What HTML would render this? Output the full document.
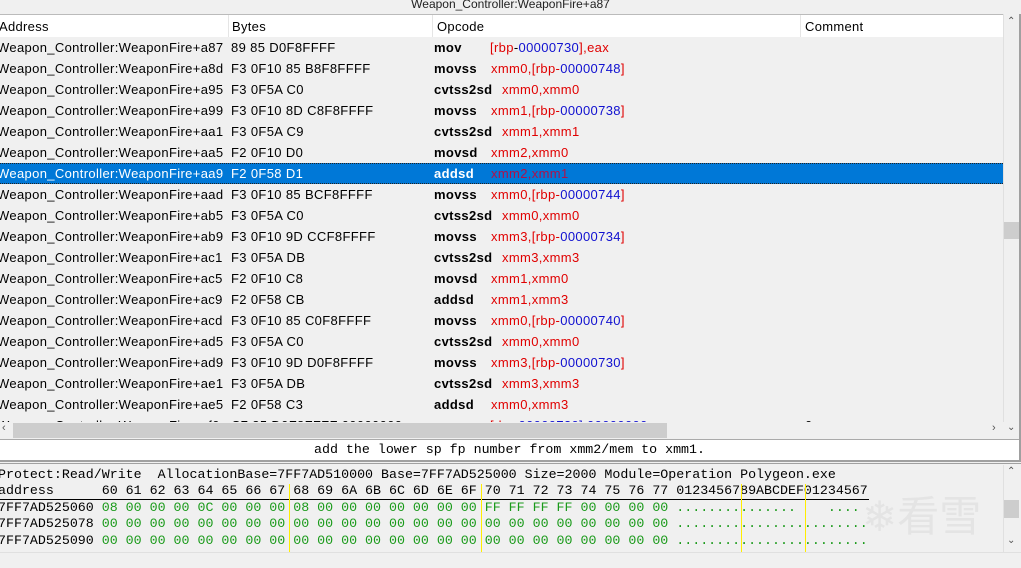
<!DOCTYPE html>
<html><head><meta charset="utf-8"><style>
*{margin:0;padding:0;box-sizing:border-box}
body{width:1021px;height:568px;overflow:hidden;background:#f0f0f0;font-family:"Liberation Sans",sans-serif;font-size:13px;position:relative;color:#000}
.abs{position:absolute;white-space:pre}
.title{left:0;top:0;width:1021px;height:13px;text-align:center;font-size:12px;line-height:9px;color:#222}
.hdr{left:0;top:14px;width:1003px;height:23px;background:#fff;border-top:1px solid #bbb}
.hdr span{position:absolute;top:4px;letter-spacing:0.3px}
.sep{position:absolute;top:0;width:1px;height:23px;background:#e5e5e5}
.rows{position:absolute;left:0;top:37px;width:1003px;height:385px;background:#f0f0f0;overflow:hidden}
.row{position:absolute;left:0;width:1003px;height:21px;line-height:21px;letter-spacing:0.35px}
.row span{position:absolute;top:0;white-space:pre}
.m{font-weight:bold}
.r{color:#e00000}.b{color:#1010d0;font-weight:normal}
.sel{background:#0078d7;color:#fff;border-top:1px dotted #222;border-bottom:1px dotted #222;line-height:19px}
.sel .r{color:#b0104a}
.mono{font-family:"Liberation Mono",monospace;font-size:13.3px}
.hex{position:absolute;left:-2px;height:16px;line-height:16px;white-space:pre}
.g{color:#1a9a1a}
.y{position:absolute;width:1px;background:#ffee00;top:484px;height:68px}
</style></head><body>
<div class="abs title">Weapon_Controller:WeaponFire+a87</div>
<div class="abs hdr">
<span style="left:-1px">Address</span><div class="sep" style="left:228px"></div>
<span style="left:232px">Bytes</span><div class="sep" style="left:432px"></div>
<span style="left:437px">Opcode</span><div class="sep" style="left:800px"></div>
<span style="left:805px">Comment</span>
</div>
<div class="abs" style="left:1003px;top:14px;width:18px;height:408px;background:#f0f0f0;border-left:1px solid #e0e0e0"></div>
<div class="abs" style="left:1007px;top:16px;font-size:10px;color:#555">&#8963;</div>
<div class="abs" style="left:1004px;top:222px;width:15px;height:17px;background:#cdcdcd"></div>
<div class="abs" style="left:1019px;top:14px;width:2px;height:446px;background:#a0a0a0"></div>

<div class="rows">
<div class="row" style="top:0px"><span style="left:-3px">Weapon_Controller:WeaponFire+a87</span><span style="left:231px">89 85 D0F8FFFF</span><span class="m" style="left:434px">mov</span><span style="left:490px"><i class="r" style="font-style:normal">[rbp</i>-<i class="b" style="font-style:normal">00000730</i><i class="r" style="font-style:normal">],eax</i></span></div>
<div class="row" style="top:21px"><span style="left:-3px">Weapon_Controller:WeaponFire+a8d</span><span style="left:231px">F3 0F10 85 B8F8FFFF</span><span class="m" style="left:434px">movss</span><span style="left:491px" class="r">xmm0,[rbp-<b class="b">00000748</b>]</span></div>
<div class="row" style="top:42px"><span style="left:-3px">Weapon_Controller:WeaponFire+a95</span><span style="left:231px">F3 0F5A C0</span><span class="m" style="left:434px">cvtss2sd</span><span style="left:502px" class="r">xmm0,xmm0</span></div>
<div class="row" style="top:63px"><span style="left:-3px">Weapon_Controller:WeaponFire+a99</span><span style="left:231px">F3 0F10 8D C8F8FFFF</span><span class="m" style="left:434px">movss</span><span style="left:491px" class="r">xmm1,[rbp-<b class="b">00000738</b>]</span></div>
<div class="row" style="top:84px"><span style="left:-3px">Weapon_Controller:WeaponFire+aa1</span><span style="left:231px">F3 0F5A C9</span><span class="m" style="left:434px">cvtss2sd</span><span style="left:502px" class="r">xmm1,xmm1</span></div>
<div class="row" style="top:105px"><span style="left:-3px">Weapon_Controller:WeaponFire+aa5</span><span style="left:231px">F2 0F10 D0</span><span class="m" style="left:434px">movsd</span><span style="left:491px" class="r">xmm2,xmm0</span></div>
<div class="row sel" style="top:126px"><span style="left:-3px">Weapon_Controller:WeaponFire+aa9</span><span style="left:231px">F2 0F58 D1</span><span class="m" style="left:434px">addsd</span><span style="left:491px" class="r">xmm2,xmm1</span></div>
<div class="row" style="top:147px"><span style="left:-3px">Weapon_Controller:WeaponFire+aad</span><span style="left:231px">F3 0F10 85 BCF8FFFF</span><span class="m" style="left:434px">movss</span><span style="left:491px" class="r">xmm0,[rbp-<b class="b">00000744</b>]</span></div>
<div class="row" style="top:168px"><span style="left:-3px">Weapon_Controller:WeaponFire+ab5</span><span style="left:231px">F3 0F5A C0</span><span class="m" style="left:434px">cvtss2sd</span><span style="left:502px" class="r">xmm0,xmm0</span></div>
<div class="row" style="top:189px"><span style="left:-3px">Weapon_Controller:WeaponFire+ab9</span><span style="left:231px">F3 0F10 9D CCF8FFFF</span><span class="m" style="left:434px">movss</span><span style="left:491px" class="r">xmm3,[rbp-<b class="b">00000734</b>]</span></div>
<div class="row" style="top:210px"><span style="left:-3px">Weapon_Controller:WeaponFire+ac1</span><span style="left:231px">F3 0F5A DB</span><span class="m" style="left:434px">cvtss2sd</span><span style="left:502px" class="r">xmm3,xmm3</span></div>
<div class="row" style="top:231px"><span style="left:-3px">Weapon_Controller:WeaponFire+ac5</span><span style="left:231px">F2 0F10 C8</span><span class="m" style="left:434px">movsd</span><span style="left:491px" class="r">xmm1,xmm0</span></div>
<div class="row" style="top:252px"><span style="left:-3px">Weapon_Controller:WeaponFire+ac9</span><span style="left:231px">F2 0F58 CB</span><span class="m" style="left:434px">addsd</span><span style="left:491px" class="r">xmm1,xmm3</span></div>
<div class="row" style="top:273px"><span style="left:-3px">Weapon_Controller:WeaponFire+acd</span><span style="left:231px">F3 0F10 85 C0F8FFFF</span><span class="m" style="left:434px">movss</span><span style="left:491px" class="r">xmm0,[rbp-<b class="b">00000740</b>]</span></div>
<div class="row" style="top:294px"><span style="left:-3px">Weapon_Controller:WeaponFire+ad5</span><span style="left:231px">F3 0F5A C0</span><span class="m" style="left:434px">cvtss2sd</span><span style="left:502px" class="r">xmm0,xmm0</span></div>
<div class="row" style="top:315px"><span style="left:-3px">Weapon_Controller:WeaponFire+ad9</span><span style="left:231px">F3 0F10 9D D0F8FFFF</span><span class="m" style="left:434px">movss</span><span style="left:491px" class="r">xmm3,[rbp-<b class="b">00000730</b>]</span></div>
<div class="row" style="top:336px"><span style="left:-3px">Weapon_Controller:WeaponFire+ae1</span><span style="left:231px">F3 0F5A DB</span><span class="m" style="left:434px">cvtss2sd</span><span style="left:502px" class="r">xmm3,xmm3</span></div>
<div class="row" style="top:357px"><span style="left:-3px">Weapon_Controller:WeaponFire+ae5</span><span style="left:231px">F2 0F58 C3</span><span class="m" style="left:434px">addsd</span><span style="left:491px" class="r">xmm0,xmm3</span></div>
<div class="row" style="top:378px"><span style="left:-3px">Weapon_Controller:WeaponFire+af0</span><span style="left:231px">C7 85 D0F8FFFF 00000000</span><span class="m" style="left:434px">mov</span><span style="left:490px" class="r">[rbp-<b class="b">00000730],00000000</b></span><span style="left:805px">0</span></div>
</div>

<div class="abs" style="left:0;top:422px;width:1019px;height:17px;background:#f0f0f0"></div>
<div class="abs" style="left:13px;top:423px;width:654px;height:15px;background:#cdcdcd"></div>
<div class="abs" style="left:2px;top:422px;font-size:11px;color:#555">&#8249;</div>
<div class="abs" style="left:992px;top:422px;font-size:11px;color:#555">&#8250;</div>
<div class="abs" style="left:1007px;top:422px;font-size:10px;color:#555">&#8964;</div>

<div class="abs" style="left:0;top:439px;width:1019px;height:21px;background:#fff;border-top:1px solid #aaa"></div>
<div class="abs mono" style="left:0;top:441px;width:1019px;text-align:center;line-height:17px">add the lower sp fp number from xmm2/mem to xmm1.</div>
<div class="abs" style="left:0;top:460px;width:1021px;height:2px;background:#a0a0a0"></div>
<div class="abs" style="left:0;top:463px;width:1021px;height:1px;background:#a0a0a0"></div>

<div class="abs" style="left:0;top:465px;width:1003px;height:87px;background:#f0f0f0"></div>
<div class="abs" style="left:1003px;top:465px;width:18px;height:87px;background:#f0f0f0;border-left:1px solid #e0e0e0"></div>
<div class="abs" style="left:1007px;top:466px;font-size:10px;color:#555">&#8963;</div>
<div class="abs" style="left:1004px;top:500px;width:15px;height:18px;background:#cdcdcd"></div>
<div class="abs" style="left:1007px;top:535px;font-size:10px;color:#555">&#8964;</div>
<div class="abs" style="left:0;top:552px;width:1021px;height:16px;background:#f0f0f0;border-top:1px solid #e0e0e0"></div>

<div class="abs" style="left:862px;top:488px;font-family:'Noto Sans CJK SC',sans-serif;font-size:42px;color:#e4e4e4;line-height:52px">&#10052;看雪</div>
<div class="mono">
<div class="hex" style="top:467px">Protect:Read/Write  AllocationBase=7FF7AD510000 Base=7FF7AD525000 Size=2000 Module=Operation Polygeon.exe</div>
<div class="hex" style="top:483px">address      60 61 62 63 64 65 66 67 68 69 6A 6B 6C 6D 6E 6F 70 71 72 73 74 75 76 77 0123456789ABCDEF01234567</div>
<div class="abs" style="left:0;top:499px;width:869px;height:1px;background:#000"></div>
<div class="hex" style="top:500px">7FF7AD525060 <span class="g">08 00 00 00 0C 00 00 00 08 00 00 00 00 00 00 00 FF FF FF FF 00 00 00 00 ...............    ....</span></div>
<div class="hex" style="top:516px">7FF7AD525078 <span class="g">00 00 00 00 00 00 00 00 00 00 00 00 00 00 00 00 00 00 00 00 00 00 00 00 ........................</span></div>
<div class="hex" style="top:533px">7FF7AD525090 <span class="g">00 00 00 00 00 00 00 00 00 00 00 00 00 00 00 00 00 00 00 00 00 00 00 00 ........................</span></div>
</div>
<div class="y" style="left:289px"></div>
<div class="y" style="left:481px"></div>
<div class="y" style="left:741px"></div>
<div class="y" style="left:805px"></div>
</body></html>
